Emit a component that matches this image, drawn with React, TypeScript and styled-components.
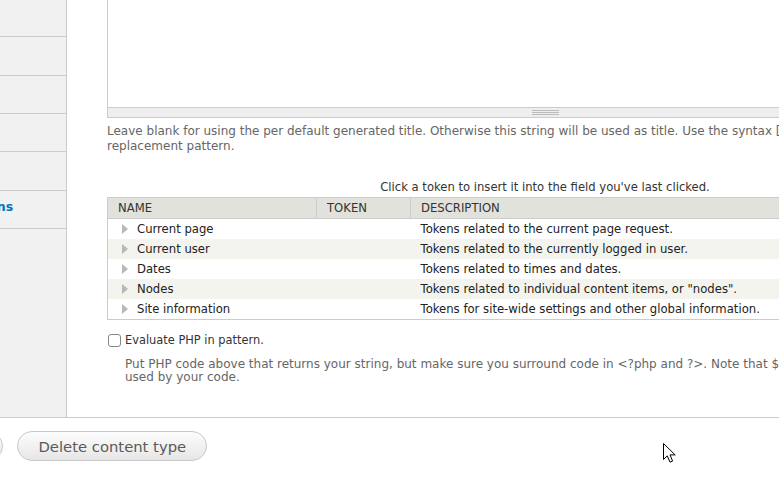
import React from 'react';
import styled, { createGlobalStyle } from 'styled-components';

const GlobalStyle = createGlobalStyle`
  html, body {
    margin: 0;
    padding: 0;
    overflow: hidden;
    background: #fff;
  }
  body {
    font-family: "DejaVu Sans", "Liberation Sans", sans-serif;
    color: #333;
  }
`;

const tabs = [
  'Title',
  'Submission',
  'Display',
  'Comments',
  'Menu settings',
  'Workflow',
  'Authoring',
  'Publishing options',
];

const tokens = [
  { name: 'Current page', description: 'Tokens related to the current page request.' },
  { name: 'Current user', description: 'Tokens related to the currently logged in user.' },
  { name: 'Dates', description: 'Tokens related to times and dates.' },
  { name: 'Nodes', description: 'Tokens related to individual content items, or "nodes".' },
  { name: 'Site information', description: 'Tokens for site-wide settings and other global information.' },
];

const App = (): React.ReactElement => {
  return (
    <>
      <GlobalStyle />
      <Page>
        <VerticalTabs>
          <TabList>
            {tabs.map((label) => (
              <TabItem key={label}>
                <TabLink>{label}</TabLink>
              </TabItem>
            ))}
          </TabList>
          <Pane>
            <PatternInput readOnly defaultValue="" />
            <Grippie>
              <GripLines />
            </Grippie>
            <HelpText>
              Leave blank for using the per default generated title. Otherwise this string will be used as
              title. Use the syntax [token] if you want to insert a replacement pattern.
            </HelpText>
            <TokenHint>Click a token to insert it into the field you've last clicked.</TokenHint>
            <TokenTable>
              <colgroup>
                <col style={{ width: 209 }} />
                <col style={{ width: 94 }} />
                <col />
              </colgroup>
              <thead>
                <tr>
                  <HeadCell>Name</HeadCell>
                  <HeadCell>Token</HeadCell>
                  <HeadCell>Description</HeadCell>
                </tr>
              </thead>
              <tbody>
                {tokens.map((token, i) => (
                  <TokenRow key={token.name} $even={i % 2 === 1}>
                    <NameCell>
                      <Expander />
                      {token.name}
                    </NameCell>
                    <Cell />
                    <Cell>{token.description}</Cell>
                  </TokenRow>
                ))}
              </tbody>
            </TokenTable>
            <CheckboxItem>
              <Checkbox type="checkbox" id="php" />
              <CheckboxLabel htmlFor="php">Evaluate PHP in pattern.</CheckboxLabel>
            </CheckboxItem>
            <CheckboxDescription>
              Put PHP code above that returns your string, but make sure you surround code in &lt;?php and
              ?&gt;. Note that $node is available and may be used by your code.
            </CheckboxDescription>
          </Pane>
        </VerticalTabs>
        <Actions>
          <Button type="button">Save content type</Button>
          <Button type="button">Delete content type</Button>
        </Actions>
      </Page>
      <Cursor width="14" height="21" viewBox="0 0 14 21">
        <path
          d="M0.5 0.5 L0.5 16.5 L4.3 12.9 L7 19.2 L9.6 18.1 L7 11.9 L12.2 11.9 Z"
          fill="#fff"
          stroke="#000"
          strokeWidth="1"
          strokeLinejoin="miter"
        />
      </Cursor>
    </>
  );
};

const Page = styled.div`
  width: 1197px;
  margin-left: -174px;
  margin-top: -78px;
`;

const VerticalTabs = styled.div`
  display: flex;
  border-bottom: 1px solid #ccc;
`;

const TabList = styled.ul`
  box-sizing: border-box;
  width: 241px;
  flex: none;
  margin: 0;
  padding: 0;
  list-style: none;
  background: #f1f1f1;
  border-right: 1px solid #ccc;
`;

const TabItem = styled.li`
  box-sizing: border-box;
  height: 38.4px;
  padding: 7px 0 0 56px;
  border-bottom: 1px solid #ccc;
  white-space: nowrap;
`;

const TabLink = styled.a`
  display: block;
  font-size: 12.5px;
  line-height: 18px;
  font-weight: bold;
  color: #0074bd;
  text-decoration: none;
`;

const Pane = styled.div`
  flex: 1;
  padding: 10px 40px 33px;
  min-width: 0;
`;

const PatternInput = styled.textarea`
  display: block;
  box-sizing: border-box;
  width: 100%;
  height: 176px;
  margin: 0;
  padding: 4px;
  border: 1px solid #ccc;
  border-radius: 0;
  resize: none;
  font: inherit;
`;

const Grippie = styled.div`
  box-sizing: border-box;
  height: 10px;
  display: flex;
  justify-content: center;
  padding-top: 2px;
  background: #eee;
  border: 1px solid #ccc;
  border-top: 0;
`;

const GripLines = styled.span`
  width: 27px;
  height: 5px;
  background: repeating-linear-gradient(to bottom, #bbb 0 1px, transparent 1px 2px);
`;

const HelpText = styled.div`
  margin-top: 6px;
  font-size: 12px;
  line-height: 15px;
  color: #666;
`;

const TokenHint = styled.div`
  margin-top: 26px;
  text-align: center;
  font-size: 11.6px;
  line-height: 15px;
  color: #333;
`;

const TokenTable = styled.table`
  width: 100%;
  margin-top: 2px;
  border-collapse: collapse;
  table-layout: fixed;
  border: 1px solid #ccc;
  font-size: 11.65px;
  color: #222;
`;

const HeadCell = styled.th`
  height: 20px;
  padding: 0 10px;
  text-align: left;
  font-weight: normal;
  text-transform: uppercase;
  background: #e1e2dc;
  border-right: 1px solid #ccc;
  border-bottom: 1px solid #ccc;
  color: #333;
  line-height: 20px;
`;

const TokenRow = styled.tr<{ $even: boolean }>`
  background: ${({ $even }) => ($even ? '#f3f4ee' : '#fff')};
`;

const Cell = styled.td`
  box-sizing: border-box;
  height: 20px;
  padding: 1px 10px 0;
  line-height: 19px;
  white-space: nowrap;
`;

const NameCell = styled(Cell)`
  padding-left: 14px;
`;

const Expander = styled.span`
  display: inline-block;
  width: 0;
  height: 0;
  margin-right: 9px;
  vertical-align: -1px;
  border-top: 5px solid transparent;
  border-bottom: 5px solid transparent;
  border-left: 6px solid #b8b8b8;
`;

const CheckboxItem = styled.div`
  display: flex;
  align-items: center;
  height: 20px;
  margin-top: 10px;
`;

const Checkbox = styled.input`
  appearance: none;
  box-sizing: border-box;
  width: 13px;
  height: 13px;
  margin: 0 4px 0 1px;
  border: 1px solid #888;
  border-radius: 3px;
  background: #fff;
`;

const CheckboxLabel = styled.label`
  font-size: 11.4px;
  line-height: 20px;
  color: #333;
`;

const CheckboxDescription = styled.div`
  max-width: 848px;
  margin: 8px 0 0 18px;
  font-size: 12px;
  line-height: 13px;
  color: #666;
`;

const Actions = styled.div`
  display: flex;
  gap: 14px;
  padding-top: 13px;
  margin-left: 0;
`;

const Button = styled.button`
  box-sizing: border-box;
  height: 30px;
  padding: 0 20px;
  border: 1px solid #c8c8c8;
  border-radius: 15px;
  background: linear-gradient(to bottom, #fdfdfd, #e6e6e6);
  font-family: "DejaVu Sans", "Liberation Sans", sans-serif;
  font-size: 14.8px;
  color: #5a5a5a;
  white-space: nowrap;
`;

const Cursor = styled.svg`
  position: fixed;
  left: 663px;
  top: 443px;
  pointer-events: none;
`;

export default App;
